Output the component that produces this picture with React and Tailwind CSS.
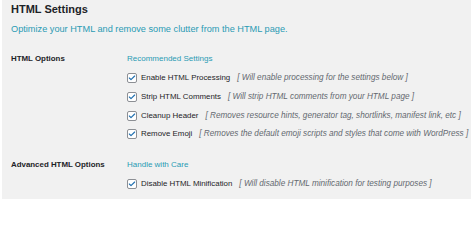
import { Check } from "lucide-react";

const recommended = [
  ["Enable HTML Processing", "[ Will enable processing for the settings below ]"],
  ["Strip HTML Comments", "[ Will strip HTML comments from your HTML page ]"],
  ["Cleanup Header", "[ Removes resource hints, generator tag, shortlinks, manifest link, etc ]"],
  ["Remove Emoji", "[ Removes the default emoji scripts and styles that come with WordPress ]"],
];

function Option({ label, hint }) {
  return (
    <label className="flex items-center h-[18.7px]">
      <span className="w-[10px] h-[10px] rounded-[2px] border border-[#8c8f94] bg-white flex items-center justify-center shrink-0">
        <Check className="w-[8px] h-[8px] text-[#2271b1]" strokeWidth={3.5} />
      </span>
      <span className="ml-[4px] text-[7.9px] text-[#1d2327]">{label}</span>
      <span className="ml-[7px] text-[8.2px] italic text-[#646970]">{hint}</span>
    </label>
  );
}

export default function App() {
  return (
    <div className="w-[474px] h-[203px] bg-white font-['Liberation_Sans',Arial,sans-serif]">
      <div className="mx-[2px] w-[469px] h-[199px] bg-[#f1f1f1] pl-[9px] pt-[1px]">
        <h1 className="text-[11px] font-bold text-[#1d2327] leading-[17px]">HTML Settings</h1>
        <p className="mt-[4px] text-[9.2px] font-medium text-[#2a9bb4] leading-[14px]">
          Optimize your HTML and remove some clutter from the HTML page.
        </p>

        <div className="flex mt-[16px]">
          <div className="w-[116px] text-[7.9px] font-bold text-[#1d2327] leading-[14px]">HTML Options</div>
          <div className="flex flex-col">
            <div className="text-[8px] font-medium text-[#2a9bb4] leading-[14px] mb-[3px]">Recommended Settings</div>
            {recommended.map(([l, h]) => (
              <Option key={l} label={l} hint={h} />
            ))}
          </div>
        </div>

        <div className="flex mt-[14px]">
          <div className="w-[116px] text-[7.9px] font-bold text-[#1d2327] leading-[14px]">Advanced HTML Options</div>
          <div className="flex flex-col">
            <div className="text-[8px] font-medium text-[#2a9bb4] leading-[14px] mb-[3px]">Handle with Care</div>
            <Option label="Disable HTML Minification" hint="[ Will disable HTML minification for testing purposes ]" />
          </div>
        </div>
      </div>
    </div>
  );
}
